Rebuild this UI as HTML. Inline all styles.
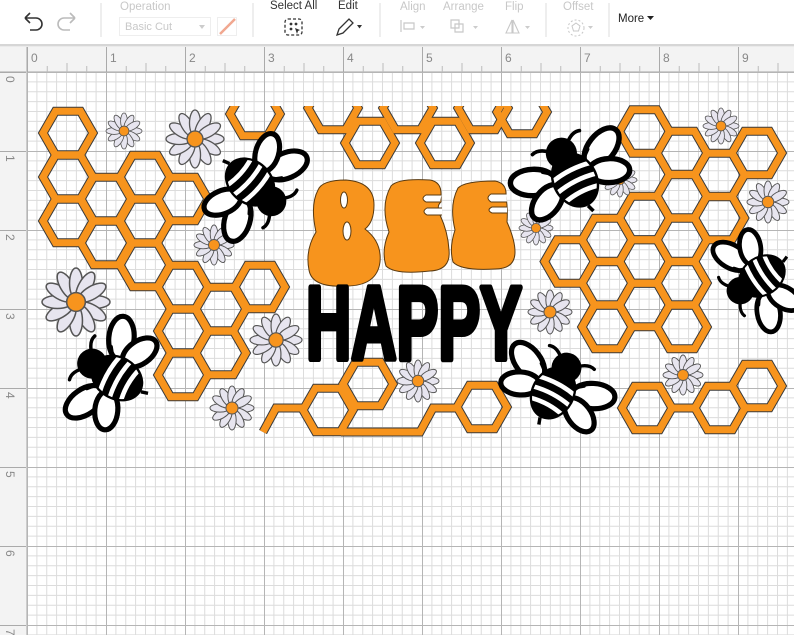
<!DOCTYPE html>
<html><head><meta charset="utf-8"><style>
html,body{margin:0;padding:0;width:794px;height:635px;overflow:hidden;background:#fff;font-family:"Liberation Sans",sans-serif}
svg{display:block}
</style></head><body>
<svg width="794" height="635" viewBox="0 0 794 635" xmlns="http://www.w3.org/2000/svg" font-family="Liberation Sans, sans-serif">
<defs>
<pattern id="grid" x="27" y="72" width="79" height="79" patternUnits="userSpaceOnUse">
<rect width="79" height="79" fill="#fff"/>
<g stroke="#dcdcdc" stroke-width="1">
<path d="M9.9 0V79M19.75 0V79M29.6 0V79M39.5 0V79M49.4 0V79M59.25 0V79M69.1 0V79"/>
<path d="M0 9.9H79M0 19.75H79M0 29.6H79M0 39.5H79M0 49.4H79M0 59.25H79M0 69.1H79"/>
</g>
<path d="M0.5 0V79M0 0.5H79" stroke="#b5b5b5" stroke-width="1"/>
</pattern>
<clipPath id="topclip"><rect x="0" y="106" width="794" height="529"/></clipPath>
<polygon id="hx" points="25,0 12.5,21.7 -12.5,21.7 -25,0 -12.5,-21.7 12.5,-21.7"/>
<g id="combs" fill="none" stroke-linejoin="miter">
<use href="#hx" x="68" y="133"/><use href="#hx" x="68" y="177"/><use href="#hx" x="68" y="221"/>
<use href="#hx" x="106" y="199"/><use href="#hx" x="106" y="243"/>
<use href="#hx" x="145" y="177"/><use href="#hx" x="145" y="221"/><use href="#hx" x="145" y="265"/>
<use href="#hx" x="183" y="199"/><use href="#hx" x="183" y="287"/><use href="#hx" x="183" y="331"/><use href="#hx" x="183" y="375"/>
<use href="#hx" x="221" y="309"/><use href="#hx" x="221" y="353"/><use href="#hx" x="260" y="287"/>
<use href="#hx" x="757" y="153"/><use href="#hx" x="682" y="153"/><use href="#hx" x="644.5" y="131.5"/>
<use href="#hx" x="719.5" y="175"/><use href="#hx" x="682" y="196"/><use href="#hx" x="719.5" y="218"/>
<use href="#hx" x="644.5" y="218"/><use href="#hx" x="607" y="240"/><use href="#hx" x="682" y="240"/>
<use href="#hx" x="569.5" y="261.5"/><use href="#hx" x="644.5" y="261.5"/><use href="#hx" x="607" y="283"/>
<use href="#hx" x="682" y="283"/><use href="#hx" x="644.5" y="305"/><use href="#hx" x="607" y="327"/><use href="#hx" x="682" y="327"/>
<use href="#hx" x="647" y="408"/><use href="#hx" x="720" y="408"/><use href="#hx" x="757" y="386"/>
<path d="M672 408H695"/>
<use href="#hx" x="328" y="410"/><use href="#hx" x="368" y="384"/><use href="#hx" x="482" y="407"/>
<path d="M263 432L276 408H303M341 432H420L433 408H457"/>
<g clip-path="url(#topclip)">
<use href="#hx" x="255" y="114"/><use href="#hx" x="333" y="108"/><use href="#hx" x="408" y="108"/><use href="#hx" x="483" y="108"/><use href="#hx" x="522" y="112"/>
<use href="#hx" x="370" y="143"/><use href="#hx" x="445" y="143"/>
</g>
</g>
<g id="dz">
<g fill="#e7e5ef" stroke="#555" stroke-width="0.9">
<ellipse cx="11" cy="0" rx="9" ry="3.8"/>
<ellipse cx="11" cy="0" rx="9" ry="3.8" transform="rotate(30)"/>
<ellipse cx="11" cy="0" rx="9" ry="3.8" transform="rotate(60)"/>
<ellipse cx="11" cy="0" rx="9" ry="3.8" transform="rotate(90)"/>
<ellipse cx="11" cy="0" rx="9" ry="3.8" transform="rotate(120)"/>
<ellipse cx="11" cy="0" rx="9" ry="3.8" transform="rotate(150)"/>
<ellipse cx="11" cy="0" rx="9" ry="3.8" transform="rotate(180)"/>
<ellipse cx="11" cy="0" rx="9" ry="3.8" transform="rotate(210)"/>
<ellipse cx="11" cy="0" rx="9" ry="3.8" transform="rotate(240)"/>
<ellipse cx="11" cy="0" rx="9" ry="3.8" transform="rotate(270)"/>
<ellipse cx="11" cy="0" rx="9" ry="3.8" transform="rotate(300)"/>
<ellipse cx="11" cy="0" rx="9" ry="3.8" transform="rotate(330)"/>
</g>
<circle r="5.5" fill="#f7941d" stroke="#555" stroke-width="0.9"/>
</g>
<clipPath id="bodyclip"><ellipse cx="0" cy="0" rx="22" ry="17"/></clipPath>
<g id="bee">
<g fill="#fff" stroke="#000" stroke-width="4.5">
<ellipse cx="14" cy="-32" rx="11" ry="19" transform="rotate(25 14 -32)"/>
<ellipse cx="-6" cy="-29" rx="10" ry="17" transform="rotate(-25 -6 -29)"/>
<ellipse cx="14" cy="32" rx="11" ry="19" transform="rotate(-25 14 32)"/>
<ellipse cx="-6" cy="29" rx="10" ry="17" transform="rotate(25 -6 29)"/>
</g>
<ellipse cx="0" cy="0" rx="24" ry="19" fill="#000"/>
<g clip-path="url(#bodyclip)" stroke="#fff" stroke-width="4" fill="none">
<path d="M-13 -16Q-9 0 -13 16M-3 -18Q1 0 -3 18M7 -18Q11 0 7 18"/>
</g>
<path d="M-24 0L-30 2" stroke="#000" stroke-width="3"/>
<circle cx="25" cy="0" r="13" fill="#000"/>
<path d="M31 -9Q37 -16 35 -22M31 9Q37 16 35 22M14 -16L18 -21M14 16L18 21" stroke="#000" stroke-width="3" fill="none" stroke-linecap="round"/>
</g>
</defs>

<!-- toolbar -->
<rect x="0" y="0" width="794" height="46" fill="#fff"/>
<rect x="0" y="44" width="794" height="2.5" fill="#d6d6d6"/>
<path d="M25 22H36A6 6 0 0 1 36 34H30M25 22l5-5M25 22l5 5" fill="none" stroke="#333" stroke-width="1.6" transform="translate(0,-4)"/>
<path d="M81 22H70A6 6 0 0 0 70 34H76M81 22l-5-5M81 22l-5 5" fill="none" stroke="#bbb" stroke-width="1.6" transform="translate(-6,-4)"/>
<line x1="101" y1="3" x2="101" y2="37" stroke="#ddd"/>
<text x="120" y="10" font-size="11.5" fill="#c8c8c8">Operation</text>
<rect x="119.5" y="17.5" width="91" height="18" fill="#fff" stroke="#eee"/>
<text x="125" y="30" font-size="11" fill="#c8c8c8">Basic Cut</text>
<path d="M199 25l3 4 3-4z" fill="#ccc"/>
<rect x="217.5" y="17.5" width="19" height="18" fill="#fff" stroke="#eee"/>
<path d="M220 34L235 19" stroke="#f1a890" stroke-width="2.5"/>
<line x1="253" y1="3" x2="253" y2="37" stroke="#ddd"/>
<text x="270" y="9" font-size="11.5" fill="#333">Select All</text>
<rect x="285" y="19" width="17" height="16" rx="3" fill="none" stroke="#333" stroke-width="1.3" stroke-dasharray="3 2"/>
<circle cx="291" cy="24" r="1.4" fill="#333"/><circle cx="296" cy="24" r="1.4" fill="#333"/><circle cx="291" cy="29" r="1.4" fill="#333"/><path d="M295 28l5 2-2 1-1 3z" fill="#333"/>
<text x="338" y="9" font-size="11.5" fill="#333">Edit</text>
<path d="M337 35l2-6 10-10 4 4-10 10z" fill="none" stroke="#333" stroke-width="1.3"/>
<path d="M357 25l2.5 3.5 2.5-3.5z" fill="#333"/>
<line x1="380" y1="3" x2="380" y2="37" stroke="#ddd"/>
<text x="400" y="10" font-size="11.5" fill="#c8c8c8">Align</text>
<path d="M401 20V32M404 23h10v6h-10z" fill="none" stroke="#c8c8c8" stroke-width="1.2"/>
<path d="M420 26l2.5 3 2.5-3z" fill="#ccc"/>
<text x="443" y="10" font-size="11.5" fill="#c8c8c8">Arrange</text>
<path d="M451 20h8v8h-8zM455 24h8v8h-8z" fill="none" stroke="#c8c8c8" stroke-width="1.2"/>
<path d="M473 26l2.5 3 2.5-3z" fill="#ccc"/>
<text x="505" y="10" font-size="11.5" fill="#c8c8c8">Flip</text>
<path d="M506 33l6-13v13zM519 33l-6-13v13z" fill="none" stroke="#c8c8c8" stroke-width="1.1"/>
<path d="M525 26l2.5 3 2.5-3z" fill="#ccc"/>
<line x1="546" y1="3" x2="546" y2="37" stroke="#ddd"/>
<text x="563" y="10" font-size="11.5" fill="#c8c8c8">Offset</text>
<circle cx="576" cy="28" r="8" fill="none" stroke="#c8c8c8" stroke-dasharray="2 2"/>
<path d="M576 23l4 3-1.5 5h-5l-1.5-5z" fill="none" stroke="#c8c8c8"/>
<path d="M588 26l2.5 3 2.5-3z" fill="#ccc"/>
<line x1="609" y1="3" x2="609" y2="37" stroke="#ddd"/>
<text x="618" y="22" font-size="11.5" fill="#222">More</text>
<path d="M647 16l3.5 4 3.5-4z" fill="#222"/>

<!-- canvas grid -->
<rect x="27" y="72" width="767" height="563" fill="url(#grid)"/>
<rect x="0" y="47" width="794" height="25" fill="#f3f3f3"/>
<rect x="0" y="72" width="26" height="563" fill="#f3f3f3"/>
<line x1="0" y1="71.5" x2="794" y2="71.5" stroke="#ccc"/>
<line x1="26.5" y1="47" x2="26.5" y2="635" stroke="#ccc"/>
<g stroke="#aaa" stroke-width="1">
<path d="M27.5 47V72M106.5 47V72M185.5 47V72M264.5 47V72M343.5 47V72M422.5 47V72M501.5 47V72M580.5 47V72M659.5 47V72M738.5 47V72"/>
<path d="M0 72.5H26M0 151.5H26M0 230.5H26M0 309.5H26M0 388.5H26M0 467.5H26M0 546.5H26M0 625.5H26"/>
</g>
<g stroke="#bbb" stroke-width="1">
<path d="M47.25 66V72M67 63V72M86.75 66V72M126.25 66V72M146 63V72M165.75 66V72M205.25 66V72M225 63V72M244.75 66V72M284.25 66V72M304 63V72M323.75 66V72M363.25 66V72M383 63V72M402.75 66V72M442.25 66V72M462 63V72M481.75 66V72M521.25 66V72M541 63V72M560.75 66V72M600.25 66V72M620 63V72M639.75 66V72M679.25 66V72M699 63V72M718.75 66V72M758.25 66V72M778 63V72"/>
</g>
<g font-size="12" fill="#888">
<text x="31" y="62">0</text><text x="110" y="62">1</text><text x="189" y="62">2</text><text x="268" y="62">3</text><text x="347" y="62">4</text><text x="426" y="62">5</text><text x="505" y="62">6</text><text x="584" y="62">7</text><text x="663" y="62">8</text><text x="742" y="62">9</text>
<g transform="rotate(90)">
<text x="76" y="-6">0</text><text x="155" y="-6">1</text><text x="234" y="-6">2</text><text x="313" y="-6">3</text><text x="392" y="-6">4</text><text x="471" y="-6">5</text><text x="550" y="-6">6</text><text x="629" y="-6">7</text>
</g>
</g>

<use href="#combs" stroke="#3a3a3a" stroke-width="9"/>
<use href="#combs" stroke="#f7941d" stroke-width="7"/>

<use href="#dz" transform="translate(124,131) scale(0.9)"/>
<use href="#dz" transform="translate(195,139) scale(1.45)"/>
<use href="#dz" transform="translate(214,245) scale(1.0)"/>
<use href="#dz" transform="translate(76,302) scale(1.7)"/>
<use href="#dz" transform="translate(276,340) scale(1.3)"/>
<use href="#dz" transform="translate(232,408) scale(1.1)"/>
<use href="#dz" transform="translate(536,228) scale(0.85)"/>
<use href="#dz" transform="translate(620,180) scale(0.85)"/>
<use href="#dz" transform="translate(721,126) scale(0.9)"/>
<use href="#dz" transform="translate(768,202) scale(1.05)"/>
<use href="#dz" transform="translate(550,312) scale(1.1)"/>
<use href="#dz" transform="translate(418,381) scale(1.05)"/>
<use href="#dz" transform="translate(683,375) scale(1.0)"/>

<use href="#bee" transform="translate(250,182) rotate(42) scale(1.15)"/>
<use href="#bee" transform="translate(575,180) rotate(-117) scale(1.2)"/>
<use href="#bee" transform="translate(117,378) rotate(-150) scale(1.15)"/>
<use href="#bee" transform="translate(762,276) rotate(146) scale(1.05)"/>
<use href="#bee" transform="translate(553,393) rotate(-62) scale(1.15)"/>

<g fill="#f7941d" stroke="#5a3a10" stroke-width="1">
<path d="M318 190Q322 180 346 180Q374 182 374 205Q374 222 365 229Q382 242 380 262Q377 286 346 286Q312 288 309 270Q305 250 316 232Q310 205 318 190Z"/>
<path d="M391 186Q398 178 430 180Q442 182 441 196L441 202Q436 206 440 215Q448 232 449 250Q451 270 430 271Q395 275 386 266Q381 250 389 232Q380 205 391 186Z"/>
<path d="M458 188Q465 181 495 181Q507 183 506 196Q508 210 507 222Q515 240 515 252Q515 269 495 269Q461 271 453 262Q449 248 455 230Q449 205 458 188Z"/>
</g>
<g fill="#fff" stroke="#5a3a10" stroke-width="1">
<ellipse cx="344" cy="200" rx="3.5" ry="8"/><ellipse cx="347" cy="231" rx="4" ry="9"/>
<path d="M441.5 195H426Q420 198.5 426 202H440" /><path d="M442 208H427Q421 211.5 427 215H442"/>
<path d="M506.5 194H491Q485 198 491 202H507"/><path d="M507 207H492Q486 210 492 213H507"/>
</g>

<text x="306" y="359" font-size="104" font-weight="bold" fill="#000" stroke="#000" stroke-width="6" stroke-linejoin="round" textLength="216" lengthAdjust="spacingAndGlyphs">HAPPY</text>
</svg>
</body></html>
